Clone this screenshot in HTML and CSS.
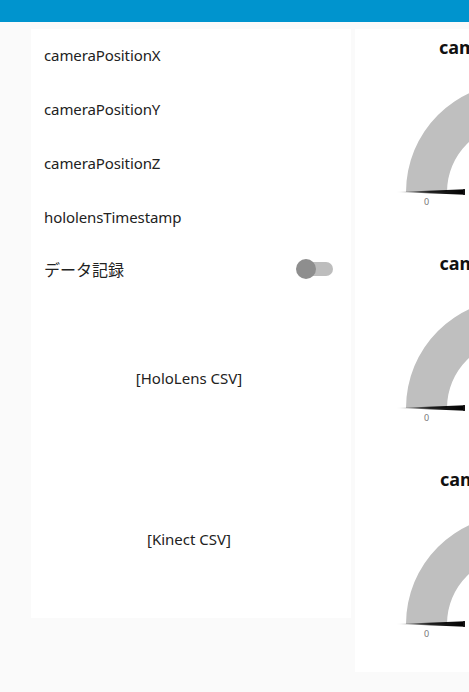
FILE: index.html
```html
<!DOCTYPE html>
<html lang="ja">
<head>
<meta charset="utf-8">
<title>Dashboard</title>
<link rel="stylesheet" href="styles.css">
</head>
<body>
<header class="topbar"></header>
<main class="layout">
  <section class="card card-left">
    <div class="row">cameraPositionX</div>
    <div class="row">cameraPositionY</div>
    <div class="row">cameraPositionZ</div>
    <div class="row">hololensTimestamp</div>
    <div class="row row-switch">
      <span class="label-jp">データ記録</span>
      <span class="switch"><span class="switch-thumb"></span></span>
    </div>
    <div class="template t1">[HoloLens CSV]</div>
    <div class="template t2">[Kinect CSV]</div>
  </section>
  <section class="card card-right">
    <div class="gauge">
      <svg class="gauge-svg" width="320" height="210" viewBox="0 0 320 210">
        <defs>
          <linearGradient id="ng1" x1="0" x2="1" y1="0" y2="0">
            <stop offset="0" stop-color="#000" stop-opacity="0"/>
            <stop offset="0.5" stop-color="#000" stop-opacity="0.85"/>
            <stop offset="1" stop-color="#000"/>
          </linearGradient>
        </defs>
        <text class="g-title" x="160" y="25">cameraPositionX</text>
        <path class="g-arc" d="M51 163 A109 109 0 0 1 269 163 L228 163 A68 68 0 0 0 92 163 Z"/>
        <polygon points="41,163 110,160.3 110,165.7" fill="url(#ng1)"/>
        <rect class="g-cap" x="108" y="160.3" width="2" height="5.4"/>
        <text class="g-min" x="71.5" y="176">0</text>
      </svg>
    </div>
    <div class="gauge">
      <svg class="gauge-svg" width="320" height="210" viewBox="0 0 320 210">
        <text class="g-title" x="160" y="25">cameraPositionY</text>
        <path class="g-arc" d="M51 163 A109 109 0 0 1 269 163 L228 163 A68 68 0 0 0 92 163 Z"/>
        <polygon points="41,163 110,160.3 110,165.7" fill="url(#ng1)"/>
        <rect class="g-cap" x="108" y="160.3" width="2" height="5.4"/>
        <text class="g-min" x="71.5" y="176">0</text>
      </svg>
    </div>
    <div class="gauge">
      <svg class="gauge-svg" width="320" height="210" viewBox="0 0 320 210">
        <text class="g-title" x="160" y="25">cameraPositionZ</text>
        <path class="g-arc" d="M51 163 A109 109 0 0 1 269 163 L228 163 A68 68 0 0 0 92 163 Z"/>
        <polygon points="41,163 110,160.3 110,165.7" fill="url(#ng1)"/>
        <rect class="g-cap" x="108" y="160.3" width="2" height="5.4"/>
        <text class="g-min" x="71.5" y="176">0</text>
      </svg>
    </div>
  </section>
</main>
</body>
</html>
```
FILE: styles.css
```css
html, body {
  margin: 0;
  padding: 0;
  overflow: hidden;
}
body {
  background: #fafafa;
  font-family: "Noto Sans", "Noto Sans CJK JP", sans-serif;
  color: #222;
  width: 469px;
  height: 692px;
}
.topbar {
  height: 22px;
  background: #0094ce;
}
.layout {
  display: flex;
  align-items: flex-start;
  gap: 4px;
  padding: 7px 0 0 31px;
  width: 800px;
}
.card {
  background: #fff;
  width: 320px;
  flex: none;
  box-sizing: border-box;
}
.card-left {
  height: 589px;
  padding-top: 2px;
  display: flex;
  flex-direction: column;
  gap: 6px;
}
.row {
  height: 48px;
  display: flex;
  align-items: center;
  padding: 0 13px;
  font-size: 15px;
  letter-spacing: -0.1px;
}
.row-switch {
  justify-content: space-between;
  padding-right: 18px;
  letter-spacing: 0;
}
.label-jp {
  font-size: 16px;
  font-family: "Noto Sans CJK JP", sans-serif;
  position: relative;
  top: -2px;
}
.switch {
  position: relative;
  width: 34px;
  height: 14px;
  border-radius: 7px;
  background: #bdbdbd;
  top: -2px;
}
.switch-thumb {
  position: absolute;
  left: -3px;
  top: -3px;
  width: 20px;
  height: 20px;
  border-radius: 50%;
  background: #8e8e8e;
}
.template {
  display: flex;
  align-items: center;
  justify-content: center;
  font-size: 15px;
  padding-right: 4px;
}
.t1 { height: 153px; }
.t2 { height: 158px; }
.card-right {
  height: 643px;
  display: flex;
  flex-direction: column;
  gap: 6px;
}
.gauge {
  height: 210px;
}
.gauge-svg {
  display: block;
}
.g-title {
  font-family: "Noto Sans", sans-serif;
  font-weight: 700;
  font-size: 18px;
  fill: #111;
  text-anchor: middle;
}
.g-arc {
  fill: #bfbfbf;
}
.g-cap {
  fill: #111;
}
.g-min {
  font-family: "Noto Sans", sans-serif;
  font-size: 9px;
  fill: #777;
  text-anchor: middle;
}
```
